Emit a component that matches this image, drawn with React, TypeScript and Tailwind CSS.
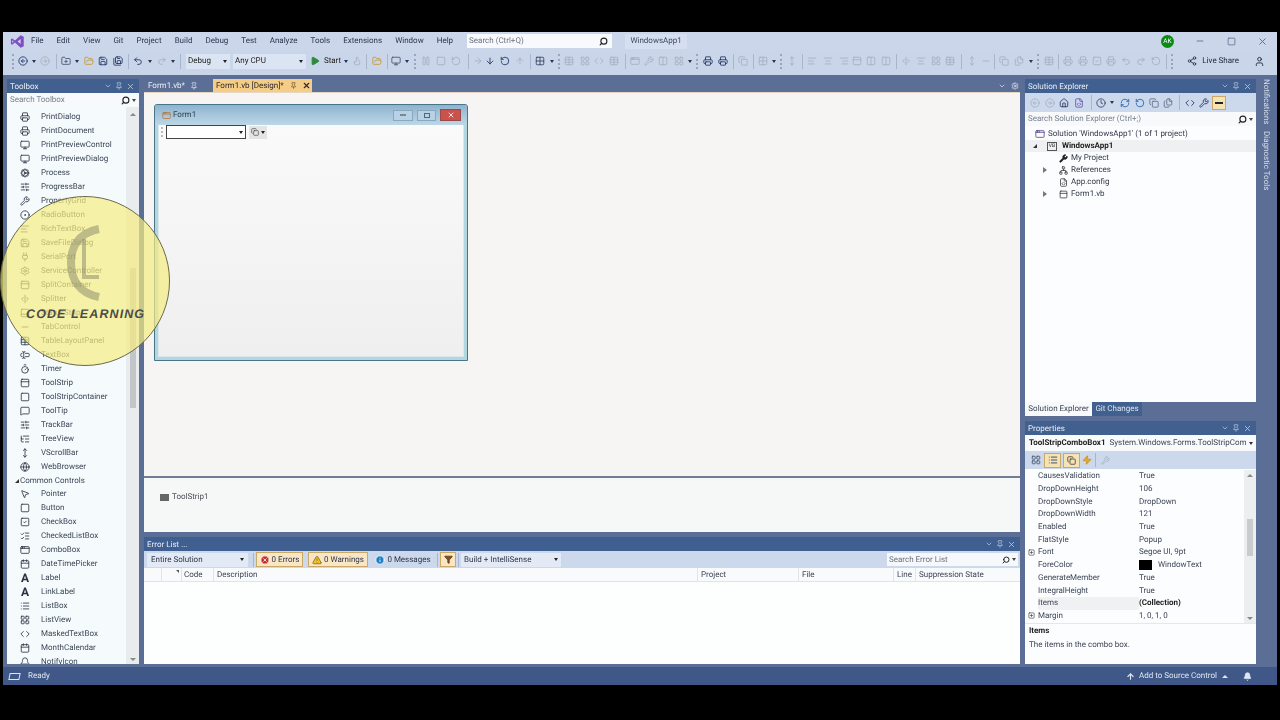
import {
  AppWindow, ArrowDown, ArrowRight, ArrowUp, Bell, Calendar, ChevronDown, CircleArrowLeft, CircleArrowRight, CircleDot, Clock, Code, Cog, Columns2, Copy, Files,
  Flame, FolderOpen, FolderPlus, Globe, Home, Info, LayoutGrid, List, ListChecks, ListTree, Minus, Monitor, MousePointer2, Network, Pause, PanelBottom, PanelTop, Pin,
  Play, Printer, Redo2, RefreshCw, RotateCcw, Save, SaveAll, Search, SeparatorVertical, Settings, Share2, SlidersHorizontal, Square, SquareCheck, SquarePlus, Table,
  TextCursorInput, Timer, Undo2, User, Wrench, X, Zap, AlignCenter, AlignLeft, AlignRight, Grid2x2, CircleX, TriangleAlert, Funnel, FileCode, MessageSquare, MoveVertical, Plug,
} from "lucide-react";

const dark = "text-[#1f3060]";
const off = "text-[#a5aebf]";

function Drop(props: { c?: string }) {
  return <span className={`w-0 h-0 border-l-[2.5px] border-r-[2.5px] border-t-[3px] border-l-transparent border-r-transparent ${props.c ?? "border-t-[#2a3557]"}`} />;
}

function Grip() {
  return <span className="w-[3px] h-[15px] border-l-2 border-dotted border-[#9aa5bb]" />;
}

function Lens(props: { size: number }) {
  return <Search size={props.size} strokeWidth={3} className="-scale-x-100" />;
}

const tools: any[] = [
  ["w-[10px]", "none"], ["w-[6px]", "grip"], ["w-[14px]", CircleArrowLeft, dark], ["w-[8px]", "drop"], ["w-[14px]", CircleArrowRight, off], ["w-[8px]", "sep"],
  ["w-[12px]", FolderPlus, "text-[#44506e]"], ["w-[10px]", "drop"], ["w-[13px]", FolderOpen, "text-[#c9962e]"], ["w-[15px]", Save, dark], ["w-[15px]", SaveAll, dark], ["w-[6px]", "sep"],
  ["w-[14px]", Undo2, dark], ["w-[10px]", "drop"], ["w-[14px]", Redo2, off], ["w-[8px]", "drop"], ["w-[6px]", "sep"],
  ["w-[3px]", "none"], ["w-[44px]", "debug"], ["w-[3px]", "none"], ["w-[73px]", "cpu"],
  ["w-[18px]", Play, "text-[#2e8b3a] fill-[#2e8b3a]"], ["w-[17px]", "start"], ["w-[10px]", "drop"], ["w-[12px]", Flame, off], ["w-[6px]", "sep"], ["w-[16px]", FolderOpen, "text-[#c9962e]"], ["w-[4px]", "sep"],
  ["w-[14px]", Monitor, "text-[#44506e]"], ["w-[8px]", "drop"], ["w-[8px]", "grip"], ["w-[14px]", Pause, off], ["w-[16px]", Square, off], ["w-[14px]", RotateCcw, off], ["w-[10px]", "sep"],
  ["w-[10px]", ArrowRight, off], ["w-[14px]", ArrowDown, dark], ["w-[16px]", RotateCcw, dark], ["w-[14px]", ArrowUp, off], ["w-[6px]", "sep"],
  ["w-[14px]", Grid2x2, "text-[#33405f]"], ["w-[10px]", "drop"], ["w-[4px]", "grip"], ["w-[16px]", Table, off], ["w-[16px]", LayoutGrid, off], ["w-[12px]", Code, off], ["w-[18px]", Table, off], ["w-[5px]", "sep"],
  ["w-[14px]", AppWindow, off], ["w-[14px]", Wrench, off], ["w-[14px]", Columns2, off], ["w-[18px]", LayoutGrid, off], ["w-[4px]", "drop"], ["w-[10px]", "grip"], ["w-[12px]", Printer, dark], ["w-[18px]", Printer, dark], ["w-[2px]", "sep"],
  ["w-[18px]", Copy, off], ["w-[2px]", "sep"], ["w-[18px]", Grid2x2, off], ["w-[4px]", "drop"], ["w-[10px]", "grip"], ["w-[12px]", MoveVertical, off], ["w-[8px]", "sep"],
  ["w-[12px]", AlignLeft, off], ["w-[20px]", AlignCenter, off], ["w-[12px]", AlignRight, off], ["w-[14px]", PanelTop, off], ["w-[14px]", Columns2, off], ["w-[16px]", Columns2, off], ["w-[4px]", "sep"],
  ["w-[16px]", SeparatorVertical, off], ["w-[14px]", AlignCenter, off], ["w-[15px]", LayoutGrid, off], ["w-[14px]", Table, off], ["w-[8px]", "sep"],
  ["w-[13px]", MoveVertical, off], ["w-[15px]", Minus, off], ["w-[3px]", "sep"], ["w-[16px]", Copy, off], ["w-[14px]", Files, off], ["w-[9px]", "drop"], ["w-[6px]", "grip"], ["w-[15px]", Table, off], ["w-[4px]", "sep"],
  ["w-[16px]", Printer, off], ["w-[14px]", Printer, off], ["w-[14px]", SquareCheck, off], ["w-[14px]", Printer, off], ["w-[15px]", Undo2, off], ["w-[16px]", Redo2, off], ["w-[14px]", RotateCcw, off], ["w-[6px]", "sep"],
];

function ToolItem(props: { t: any[] }) {
  const [w, k, c] = props.t;
  let inner: any = null;
  if (k === "grip") inner = <Grip />;
  else if (k === "drop") inner = <Drop />;
  else if (k === "sep") inner = <span className="w-px h-[15px] bg-[#a9b5cc]" />;
  else if (k === "start") inner = <span className="text-[#222]">Start</span>;
  else if (k === "debug")
    inner = (
      <span className="w-full h-[15px] bg-[#dbe4f2] flex items-center justify-between pl-[2px] pr-[3px] text-[#222]">
        Debug <Drop c="border-t-[#222]" />
      </span>
    );
  else if (k === "cpu")
    inner = (
      <span className="w-full h-[15px] bg-[#dbe4f2] flex items-center justify-between pl-[2px] pr-[3px] text-[#222]">
        Any CPU <Drop c="border-t-[#222]" />
      </span>
    );
  else if (k !== "none") {
    const I = k;
    inner = <I size={10} strokeWidth={2} className={c} />;
  }
  return <div className={`${w} shrink-0 flex items-center justify-center`}>{inner}</div>;
}

const boxA: any[] = [
  ["PrintDialog", Printer], ["PrintDocument", Printer], ["PrintPreviewControl", Monitor], ["PrintPreviewDialog", Monitor], ["Process", Cog], ["ProgressBar", SlidersHorizontal],
  ["PropertyGrid", Wrench], ["RadioButton", CircleDot], ["RichTextBox", AlignLeft], ["SaveFileDialog", Save], ["SerialPort", Plug], ["ServiceController", Settings],
  ["SplitContainer", PanelTop], ["Splitter", SeparatorVertical], ["StatusStrip", PanelBottom], ["TabControl", Minus], ["TableLayoutPanel", Table], ["TextBox", TextCursorInput],
  ["Timer", Timer], ["ToolStrip", PanelTop], ["ToolStripContainer", Square], ["ToolTip", MessageSquare], ["TrackBar", SlidersHorizontal], ["TreeView", ListTree], ["VScrollBar", MoveVertical], ["WebBrowser", Globe],
];
const boxB: any[] = [
  ["Pointer", MousePointer2], ["Button", Square], ["CheckBox", SquareCheck], ["CheckedListBox", ListChecks], ["ComboBox", AppWindow], ["DateTimePicker", Calendar],
  ["Label", "A"], ["LinkLabel", "A"], ["ListBox", List], ["ListView", LayoutGrid], ["MaskedTextBox", Code], ["MonthCalendar", Calendar],
];

function BoxRow(props: { name: string; icon: any }) {
  const I = props.icon;
  return (
    <div className="h-[14px] shrink-0 flex items-center">
      <span className="w-[34px] flex justify-center pl-[2px] text-[#2b3342]">
        {I === "A" ? <span className="text-[12px] leading-none font-bold">A</span> : <I size={10} strokeWidth={2} />}
      </span>
      <span className="text-[#3d4657] whitespace-nowrap">{props.name}</span>
    </div>
  );
}

function PanelHead(props: { title: string }) {
  return (
    <div className="h-[14px] shrink-0 bg-[#41608f] flex items-center pl-[3px] pr-[4px] text-[#e8edf6]">
      <span className="flex-1 pt-[1px]">{props.title}</span>
      <ChevronDown size={8} className="text-[#c5d0e4] mr-[3px]" />
      <Pin size={8} className="text-[#c5d0e4] mr-[3px]" />
      <X size={9} className="text-[#c5d0e4]" />
    </div>
  );
}

const props1: any[] = [
  ["CausesValidation", "True"], ["DropDownHeight", "106"], ["DropDownStyle", "DropDown"], ["DropDownWidth", "121"], ["Enabled", "True"], ["FlatStyle", "Popup"],
  ["Font", "Segoe UI, 9pt", "plus"], ["ForeColor", "WindowText", "color"], ["GenerateMember", "True"], ["IntegralHeight", "True"], ["Items", "(Collection)", "sel"], ["Margin", "1, 0, 1, 0", "plus"],
];

const seTools: any[] = [
  ["w-[15px]", CircleArrowLeft, off], ["w-[15px]", CircleArrowRight, off], ["w-[14px]", Home, dark], ["w-[16px]", FileCode, "text-[#6a4fa8]"], ["w-[8px]", "sep"], ["w-[12px]", Clock, "text-[#33405f]"],
  ["w-[10px]", "drop"], ["w-[15px]", RefreshCw, "text-[#1f5fb0]"], ["w-[15px]", RotateCcw, "text-[#1f5fb0]"], ["w-[14px]", Copy, "text-[#5c6a85]"], ["w-[14px]", Files, "text-[#5c6a85]"], ["w-[8px]", "sep"],
  ["w-[14px]", Code, dark], ["w-[14px]", Wrench, dark],
];

export default function App() {
  return (
    <div className="w-[1280px] h-[720px] bg-black overflow-hidden pt-[32px] px-[3px] relative font-['Roboto',sans-serif] text-[8px] leading-none [text-rendering:geometricPrecision]">
      <div className="h-[653px] bg-[#5b6f96] flex flex-col blur-[0.3px]">
        {/* title bar */}
        <div className="h-[18px] shrink-0 bg-[#cbd6ea] flex items-center relative">
          <svg width="15" height="15" viewBox="0 0 24 24" className="ml-[7px] shrink-0">
            <path d="M17 2 L22 4.5 V19.5 L17 22 L8 13.5 L3.5 17 L1.5 16 V8 L3.5 7 L8 10.5 Z M17 8 L12 12 L17 16 Z M3.5 9.8 V14.2 L6 12 Z" fill="#7d4fc0" fillRule="evenodd" />
          </svg>
          <div className="flex gap-[13px] ml-[6px] text-[#2b3550] shrink-0">
            {["File", "Edit", "View", "Git", "Project", "Build", "Debug", "Test", "Analyze", "Tools", "Extensions", "Window", "Help"].map((m) => (
              <span key={m}>{m}</span>
            ))}
          </div>
          <div className="w-[145px] h-[14px] ml-[14px] bg-[#f7f9fc] flex items-center justify-between px-[2px] pr-[4px] text-[#6b7280] shrink-0">
            Search (Ctrl+Q) <span className="text-[#222]"><Lens size={9} /></span>
          </div>
          <div className="h-[15px] w-[62px] ml-[13px] bg-[#d5dff0] flex items-center justify-center text-[#3d4a66] shrink-0">WindowsApp1</div>
          <div className="ml-auto flex items-center shrink-0 text-[#5a6a88]">
            <span className="w-[13px] h-[13px] rounded-full bg-[#0b8a14] text-white text-[6.5px] flex items-center justify-center">AK</span>
            <Minus size={10} className="ml-[21px]" />
            <Square size={9} className="ml-[22px]" />
            <X size={11} className="ml-[21px] mr-[9px]" />
          </div>
        </div>
        {/* toolbar */}
        <div className="h-[25px] shrink-0 bg-[#c9d5e9] flex items-center pb-[3px]">
          <div className="flex items-center -ml-[3px]">
            {tools.map((t, i) => (
              <ToolItem key={i} t={t} />
            ))}
            <span className="w-[6px] h-[15px] flex flex-col justify-between items-center"><Grip /></span>
          </div>
          <div className="ml-auto flex items-center mr-[12px] text-[#222b42]">
            <Share2 size={10} className="mr-[5px]" />
            <span>Live Share</span>
            <User size={11} className="ml-[15px]" />
          </div>
        </div>
        {/* main */}
        <div className="flex-1 min-h-0 flex pt-[4px] pb-[3px] pl-[4px]">
          {/* toolbox */}
          <div className="w-[132px] shrink-0 flex flex-col">
            <PanelHead title="Toolbox" />
            <div className="h-[14px] shrink-0 bg-[#f7f9fb] flex items-center justify-between pl-[3px] pr-[3px] text-[#7a8290]">
              Search Toolbox
              <span className="flex items-center gap-[2px] text-[#222]"><Lens size={9} /><Drop c="border-t-[#444]" /></span>
            </div>
            <div className="flex-1 min-h-0 flex bg-[#f5fbfd]">
              <div className="flex-1 min-w-0 overflow-hidden pt-[3px]">
                {boxA.map((r) => (
                  <BoxRow key={r[0]} name={r[0]} icon={r[1]} />
                ))}
                <div className="h-[13px] flex items-center pl-[8px] text-[#3d4657]">
                  <span className="w-0 h-0 border-l-[4px] border-b-[4px] border-l-transparent border-b-[#333]" />
                  <span className="ml-[1px]">Common Controls</span>
                </div>
                {boxB.map((r) => (
                  <BoxRow key={r[0]} name={r[0]} icon={r[1]} />
                ))}
                <div className="h-[10px] overflow-hidden">
                  <BoxRow name="NotifyIcon" icon={Bell} />
                </div>
              </div>
              <div className="w-[13px] shrink-0 bg-[#e8eced] flex flex-col items-center pt-[6px] pb-[3px]">
                <span className="w-0 h-0 border-l-[3px] border-r-[3px] border-b-[3px] border-l-transparent border-r-transparent border-b-[#888]" />
                <span className="w-[6px] h-[140px] bg-[#c2c6c9] mt-[152px]" />
                <span className="w-0 h-0 border-l-[3px] border-r-[3px] border-t-[3px] border-l-transparent border-r-transparent border-t-[#888] mt-auto" />
              </div>
            </div>
          </div>
          {/* editor */}
          <div className="w-[876px] shrink-0 ml-[5px] flex flex-col">
            <div className="h-[13px] shrink-0 flex items-center text-[#e8edf6] whitespace-nowrap">
              <div className="w-[69px] flex items-center pl-[4px]">
                Form1.vb*
                <Pin size={8} className="ml-[5px]" />
              </div>
              <div className="w-[99px] h-full bg-[#f5cd86] flex items-center pl-[3px] text-[#2a2a2a]">
                Form1.vb [Design]*
                <Pin size={7} className="ml-[6px] text-[#57451d]" />
                <X size={9} className="ml-[5px]" strokeWidth={3} />
              </div>
              <ChevronDown size={8} className="ml-auto mr-[5px] text-[#e8edf6]" />
              <Settings size={8} className="mr-[1px]" />
            </div>
            <div className="h-[384px] shrink-0 bg-[#f6f5f3] pl-[10px] pt-[11px] border-t border-[#e6d7c4]">
              {/* form */}
              <div className="w-[314px] h-[257px] bg-[#b3d7df] rounded-t-[3px] border border-[#4a7488] flex flex-col px-[3px] pb-[3px]">
                <div className="h-[20px] shrink-0 -mx-[3px] px-[5px] bg-gradient-to-b from-[#8fb3cf] to-[#bcd8e6] flex items-center text-[#2c3e4d] rounded-t-[3px]">
                  <AppWindow size={9} className="text-[#b4763a] mr-[2px] ml-[2px]" />
                  Form1
                  <div className="ml-auto flex gap-[4px] items-center mr-[1px]">
                    <span className="w-[20px] h-[11px] bg-[#b7d2e4] border border-[#8ba6bd] flex items-center justify-center"><span className="w-[6px] h-[2px] bg-[#789]" /></span>
                    <span className="w-[19px] h-[11px] bg-[#b7d2e4] border border-[#8ba6bd] flex items-center justify-center"><span className="w-[6px] h-[5px] border border-[#567]" /></span>
                    <span className="w-[21px] h-[12px] bg-[#c9524a] border border-[#9a4a48] flex items-center justify-center"><X size={8} className="text-[#f3dede]" strokeWidth={3} /></span>
                  </div>
                </div>
                <div className="flex-1 min-h-0 bg-gradient-to-b from-[#fafafa] to-[#efefef] border border-t-0 border-[#dde8ec]">
                  <div className="h-[14px] flex items-center">
                    <span className="w-[3px] h-[10px] ml-[2px] border-l-2 border-dotted border-[#bbb]" />
                    <div className="w-[80px] h-[14px] ml-[2px] bg-white border border-[#444] flex items-center justify-end pr-[2px]"><Drop c="border-t-[#222]" /></div>
                    <div className="w-[18px] h-[13px] ml-[3px] bg-[#e4e4e4] flex items-center justify-center gap-[2px]"><Copy size={8} className="text-[#444]" /><Drop c="border-t-[#222]" /></div>
                  </div>
                </div>
              </div>
            </div>
            <div className="h-[2px] shrink-0 bg-[#6f7d95]" />
            <div className="h-[54px] shrink-0 bg-[#f6f7f7] flex items-start pl-[16px] pt-[15px] text-[#4a5058]">
              <span className="flex items-center"><span className="w-[9px] h-[7px] bg-[#666] mr-[3px]" />ToolStrip1</span>
            </div>
            {/* error list */}
            <div className="flex-1 min-h-0 mt-[5px] flex flex-col">
              <div className="h-[14px] shrink-0 bg-[#3f5f90] flex items-center pl-[3px] pr-[4px] text-[#e8edf6]">
                <span className="flex-1 pt-[1px]">Error List ...</span>
                <ChevronDown size={8} className="text-[#c5d0e4] mr-[3px]" />
                <Pin size={8} className="text-[#c5d0e4] mr-[3px]" />
                <X size={9} className="text-[#c5d0e4]" />
              </div>
              <div className="h-[17px] shrink-0 bg-[#ccd8ec] flex items-center pl-[3px] pr-[2px] text-[#2e3647] whitespace-nowrap">
                <div className="w-[101px] h-[14px] bg-[#e3eaf5] flex items-center justify-between px-[4px]">Entire Solution <Drop c="border-t-[#222]" /></div>
                <span className="w-px h-[14px] bg-[#a9b5cc] ml-[5px]" />
                <div className="w-[47px] h-[15px] ml-[2px] bg-[#f9e6c4] border border-[#c9a868] flex items-center justify-center gap-[2px]"><CircleX size={10} className="text-white fill-[#c8342c]" />0 Errors</div>
                <div className="w-[60px] h-[15px] ml-[5px] bg-[#f9e6c4] border border-[#c9a868] flex items-center justify-center gap-[2px]"><TriangleAlert size={10} className="text-[#8a6a10] fill-[#f2c230]" />0 Warnings</div>
                <div className="w-[62px] h-[15px] ml-[4px] flex items-center justify-center gap-[2px]"><Info size={10} className="text-white fill-[#1f7fc4]" />0 Messages</div>
                <span className="w-px h-[14px] bg-[#a9b5cc] ml-[3px]" />
                <div className="w-[16px] h-[15px] ml-[2px] bg-[#f9e6c4] border border-[#c9a868] flex items-center justify-center"><Funnel size={9} className="text-[#5a3a10] fill-[#8a4a20]" /></div>
                <span className="w-px h-[14px] bg-[#a9b5cc] ml-[2px]" />
                <div className="w-[100px] h-[14px] ml-[2px] bg-[#e3eaf5] flex items-center justify-between px-[3px]">Build + IntelliSense <Drop c="border-t-[#222]" /></div>
                <div className="w-[131px] h-[13px] ml-auto bg-[#f6f8fb] flex items-center justify-between px-[2px] text-[#6b7280]">Search Error List <span className="flex items-center gap-[2px] text-[#222]"><Lens size={8} /><Drop c="border-t-[#444]" /></span></div>
              </div>
              <div className="h-[14px] shrink-0 bg-[#f8fafb] border-b border-[#e2e5e8] flex items-center text-[#3d4657] relative whitespace-nowrap">
                <span className="w-[17px]" />
                <span className="w-[20px] h-full border-l border-[#e2e5e8] flex justify-end pr-[2px] pt-[2px]">
                  <span className="w-0 h-0 border-t-[3px] border-l-[3px] border-l-transparent border-t-[#555]" />
                </span>
                <span className="w-[32px] h-full pl-[2px] border-l border-[#e2e5e8] flex items-center">Code</span>
                <span className="w-[484px] h-full pl-[3px] border-l border-[#e2e5e8] flex items-center">Description</span>
                <span className="w-[101px] h-full pl-[3px] border-l border-[#e2e5e8] flex items-center">Project</span>
                <span className="w-[95px] h-full pl-[3px] border-l border-[#e2e5e8] flex items-center">File</span>
                <span className="w-[22px] h-full pl-[3px] border-l border-[#e2e5e8] flex items-center">Line</span>
                <span className="flex-1 h-full pl-[3px] border-l border-[#e2e5e8] flex items-center">Suppression State</span>
              </div>
              <div className="flex-1 bg-[#fdfefe]" />
            </div>
          </div>
          {/* right column */}
          <div className="w-[231px] shrink-0 ml-[5px] flex flex-col">
            <PanelHead title="Solution Explorer" />
            <div className="h-[19px] shrink-0 bg-[#ccd8ec] flex items-center pl-[2px]">
              {seTools.map((t, i) => (
                <ToolItem key={i} t={t} />
              ))}
              <div className="w-[14px] h-[14px] ml-[1px] bg-[#f6e3b4] border border-[#c9a868] flex items-center justify-center"><span className="w-[8px] h-[2px] bg-[#222]" /></div>
            </div>
            <div className="h-[14px] shrink-0 bg-[#f7f9fb] flex items-center justify-between pl-[3px] pr-[3px] text-[#7a8290]">
              Search Solution Explorer (Ctrl+;)
              <span className="flex items-center gap-[2px] text-[#222]"><Lens size={9} /><Drop c="border-t-[#444]" /></span>
            </div>
            <div className="h-[276px] shrink-0 bg-[#fbfdfe] pt-[2px] text-[#333a48]">
              <div className="h-[12px] flex items-center pl-[10px]"><AppWindow size={10} className="text-[#5b4a90] mr-[3px]" />Solution 'WindowsApp1' (1 of 1 project)</div>
              <div className="h-[12px] flex items-center pl-[8px] bg-[#eef0f2] font-bold text-[#222]">
                <span className="w-0 h-0 border-l-[4px] border-b-[4px] border-l-transparent border-b-[#333] mr-[10px]" />
                <span className="w-[10px] h-[9px] border border-[#555] text-[5px] flex items-center justify-center mr-[5px] font-normal">VB</span>
                WindowsApp1
              </div>
              <div className="h-[12px] flex items-center pl-[34px]"><Wrench size={9} className="text-[#222] fill-[#222] mr-[3px]" />My Project</div>
              <div className="h-[12px] flex items-center pl-[18px]">
                <span className="w-0 h-0 border-y-[3px] border-l-[4px] border-y-transparent border-l-[#777] mr-[12px]" />
                <Network size={9} className="text-[#333] mr-[3px]" />References
              </div>
              <div className="h-[12px] flex items-center pl-[34px]"><FileCode size={9} className="text-[#333] mr-[3px]" />App.config</div>
              <div className="h-[12px] flex items-center pl-[18px]">
                <span className="w-0 h-0 border-y-[3px] border-l-[4px] border-y-transparent border-l-[#777] mr-[12px]" />
                <PanelTop size={9} className="text-[#333] mr-[3px]" />Form1.vb
              </div>
            </div>
            <div className="h-[14px] shrink-0 flex whitespace-nowrap">
              <div className="w-[67px] bg-[#f7f9fb] flex items-center justify-center text-[#3d4657]">Solution Explorer</div>
              <div className="w-[50px] bg-[#41608f] flex items-center justify-center text-[#dbe3f0]">Git Changes</div>
            </div>
            <div className="mt-[5px] flex-1 min-h-0 flex flex-col">
              <PanelHead title="Properties" />
              <div className="h-[16px] shrink-0 bg-[#f8fafb] flex items-center pl-[4px] pr-[3px] text-[#3d4657]">
                <b className="text-[#222] mr-[4px] whitespace-nowrap">ToolStripComboBox1</b>
                <span className="whitespace-nowrap flex-1">System.Windows.Forms.ToolStripCom</span>
                <Drop c="border-t-[#333]" />
              </div>
              <div className="h-[18px] shrink-0 bg-[#ccd8ec] flex items-center pl-[4px] text-[#333]">
                <span className="w-[14px] flex justify-center"><LayoutGrid size={10} className="text-[#44506e]" /></span>
                <span className="w-[17px] h-[15px] ml-[1px] bg-[#f6e3b4] border border-[#c9a868] flex items-center justify-center"><List size={10} className="text-[#1f3060]" /></span>
                <span className="w-[17px] h-[15px] ml-[2px] bg-[#f6e3b4] border border-[#c9a868] flex items-center justify-center"><Copy size={9} /></span>
                <span className="w-[14px] flex justify-center"><Zap size={10} className="text-[#c98a10] fill-[#e8b020]" /></span>
                <span className="w-px h-[14px] bg-[#a9b5cc] ml-[1px]" />
                <span className="w-[19px] flex justify-center"><Wrench size={9} className="text-[#a5aebf]" /></span>
              </div>
              <div className="h-[154px] shrink-0 bg-[#fbfdfe] flex pt-[1px] text-[#3d4657]">
                <div className="flex-1 min-w-0">
                  {props1.map((p) => (
                    <div key={p[0]} className="h-[12.7px] flex items-center relative">
                      <span className={`w-[13px] flex justify-center ${p[2] === "plus" ? "" : "invisible"}`}><SquarePlus size={7} className="text-[#333]" /></span>
                      <span className={`w-[101px] h-full flex items-center ${p[2] === "sel" ? "bg-[#eff1f2]" : ""}`}>{p[0]}</span>
                      {p[2] === "color" && <span className="w-[13px] h-[10px] bg-black mr-[6px]" />}
                      <span className={p[2] === "sel" ? "font-bold text-[#222]" : ""}>{p[1]}</span>
                    </div>
                  ))}
                </div>
                <div className="w-[12px] shrink-0 bg-[#eceff0] flex flex-col items-center pt-[4px] pb-[3px]">
                  <span className="w-0 h-0 border-l-[3px] border-r-[3px] border-b-[3px] border-l-transparent border-r-transparent border-b-[#888]" />
                  <span className="w-[6px] h-[37px] bg-[#c8ccce] mt-[42px]" />
                  <span className="w-0 h-0 border-l-[3px] border-r-[3px] border-t-[3px] border-l-transparent border-r-transparent border-t-[#888] mt-auto" />
                </div>
              </div>
              <div className="flex-1 bg-[#fbfdfe] border-t border-[#e4e8ea] pl-[4px] pt-[3px] text-[#3d4657]">
                <div className="font-bold text-[#222] h-[12px]">Items</div>
                <div className="h-[12px] flex items-center">The items in the combo box.</div>
              </div>
            </div>
          </div>
          {/* side strip */}
          <div className="w-[21px] shrink-0 flex flex-col items-center text-[#d7deec] gap-[7px] pr-[1px]">
            <span className="[writing-mode:vertical-rl]">Notifications</span>
            <span className="[writing-mode:vertical-rl]">Diagnostic Tools</span>
          </div>
        </div>
        {/* status bar */}
        <div className="h-[18px] shrink-0 bg-[#3f5888] flex items-center pl-[6px] text-[#dfe6f2]">
          <span className="w-[11px] h-[7px] border border-[#dfe6f2] -skew-x-12" />
          <span className="ml-[8px]">Ready</span>
          <div className="ml-auto flex items-center mr-[25px]">
            <ArrowUp size={9} className="mr-[4px]" strokeWidth={3} />
            Add to Source Control
            <span className="w-0 h-0 border-l-[3px] border-r-[3px] border-b-[3px] border-l-transparent border-r-transparent border-b-[#dfe6f2] ml-[5px]" />
            <Bell size={9} className="ml-[15px] fill-[#dfe6f2]" />
          </div>
        </div>
      </div>
      {/* watermark */}
      <div className="absolute left-0 top-[196px] w-[170px] h-[170px] rounded-full bg-[#f5ec82]/70 border border-[#6b6a4a]">
        <svg width="60" height="76" viewBox="0 0 60 76" className="absolute left-[66px] top-[28px]" fill="none" stroke="#8e8e6e" strokeOpacity="0.55">
          <path d="M32 4 C10 8 4 24 4 38 C4 54 12 68 32 72" strokeWidth="8" />
          <path d="M17 14 V52 H32" strokeWidth="4" />
        </svg>
        <span className="absolute left-[25px] top-[111px] text-[12.5px] font-bold italic tracking-[1.1px] text-[#4a4c48] whitespace-nowrap font-['Liberation_Sans',sans-serif]">CODE LEARNING</span>
      </div>
    </div>
  );
}
